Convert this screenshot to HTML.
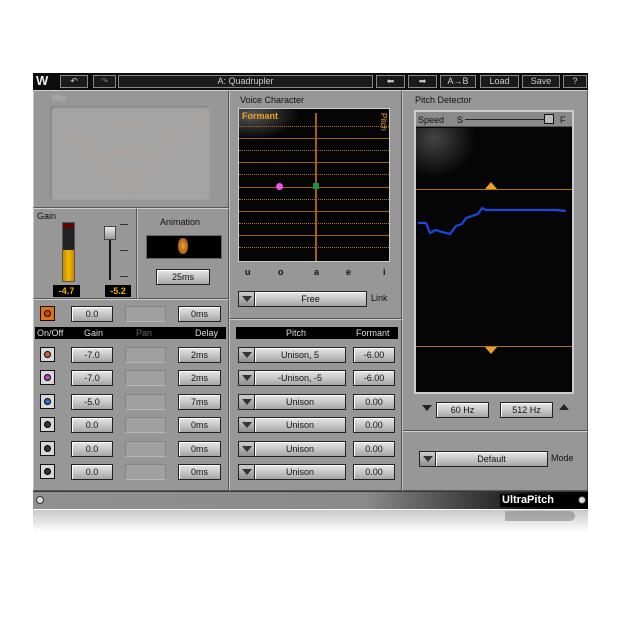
<!DOCTYPE html><html><head><style>
*{margin:0;padding:0;box-sizing:border-box}
body{width:620px;height:620px;background:#fff;position:relative;overflow:hidden;font-family:"Liberation Sans",sans-serif;font-size:9px;color:#111}
.a{position:absolute}
.tb{position:absolute;top:75px;height:13px;border:1px solid #888;background:#1a1a1a;color:#ccc;font-size:9px;text-align:center;line-height:11px}
.p{position:absolute;background:#979797;border-top:1px solid #cfcfcf;border-left:1px solid #c4c4c4;border-right:1px solid #555;border-bottom:1px solid #555}
.b{position:absolute;height:16px;border:1px solid #222;background:linear-gradient(#e6e6e6,#c8c8c8 50%,#a6a6a6);text-align:center;line-height:14px;font-size:9px;color:#111;box-shadow:inset 1px 1px 0 #fff}
.pan{position:absolute;height:16px;background:#a0a0a0;border:1px solid #858585;border-bottom-color:#b8b8b8}
.dd{position:absolute;width:17px;height:16px;border:1px solid #222;background:linear-gradient(#cfcfcf,#8f8f8f)}
.dd:after{content:"";position:absolute;left:3px;top:4px;border-left:5px solid transparent;border-right:5px solid transparent;border-top:6px solid #333}
.led{position:absolute;width:15px;height:15px;border:1px solid #111;background:#d8d8d8}
.led i{position:absolute;left:3px;top:3px;width:7px;height:7px;border-radius:50%;border:1px solid #000}
.hd{position:absolute;height:12px;background:#000;color:#ddd;font-size:9px;line-height:12px}
.lbl{position:absolute;font-size:9px;color:#111}
.hl{position:absolute;left:0;width:152px;height:1px;background:#a06010}
.dl{position:absolute;left:0;width:152px;border-top:1px dotted #b07020}
</style></head><body>
<div class="a" style="left:33px;top:73px;width:555px;height:436px;background:#3a3a3a"></div>
<div class="a" style="left:33px;top:73px;width:555px;height:17px;background:#0c0c0c"></div>
<div class="a" style="left:36px;top:74px;color:#eee;font-size:13px;font-weight:bold;line-height:14px">W</div>
<div class="tb" style="left:60px;width:28px">↶</div>
<div class="tb" style="left:93px;width:23px;color:#777">↷</div>
<div class="tb" style="left:118px;width:255px">A: Quadrupler</div>
<div class="tb" style="left:376px;width:29px">⬅</div>
<div class="tb" style="left:408px;width:29px">➡</div>
<div class="tb" style="left:440px;width:36px">A→B</div>
<div class="tb" style="left:480px;width:39px">Load</div>
<div class="tb" style="left:522px;width:38px">Save</div>
<div class="tb" style="left:563px;width:24px">?</div>

<div class="p" style="left:33px;top:90px;width:196px;height:118px"></div>
<div class="lbl" style="left:52px;top:93px;color:#b8b8b8">Mix</div>
<div class="a" style="left:50px;top:106px;width:160px;height:94px;background:#a4a4a4;border-radius:4px;box-shadow:inset 1px 1px 2px #777"></div>
<svg class="a" style="left:50px;top:106px" width="160" height="94"><g fill="none" stroke="#c09a80" stroke-width="0.8" opacity=".7"><path d="M8 8 L80 88 L152 8"/><path d="M26 43 A70 70 0 0 1 134 43"/><path d="M45.5 59 A45 45 0 0 1 114.5 59"/><path d="M63 74 A22 22 0 0 1 97 74"/></g></svg>

<div class="p" style="left:33px;top:208px;width:104px;height:91px"></div>
<div class="lbl" style="left:37px;top:211px">Gain</div>
<div class="a" style="left:62px;top:222px;width:13px;height:60px;background:#222;border:1px solid #555"></div>
<div class="a" style="left:63px;top:224px;width:11px;height:4px;background:#600"></div>
<div class="a" style="left:63px;top:250px;width:11px;height:31px;background:linear-gradient(90deg,#c88a00,#f0b800,#c88a00)"></div>
<div class="a" style="left:109px;top:226px;width:2px;height:54px;background:#111"></div>
<div class="a" style="left:104px;top:226px;width:12px;height:14px;background:linear-gradient(#eee,#999);border:1px solid #444"></div>
<div class="a" style="left:120px;top:224px;width:8px;height:1px;background:#333"></div>
<div class="a" style="left:120px;top:250px;width:8px;height:1px;background:#333"></div>
<div class="a" style="left:120px;top:276px;width:8px;height:1px;background:#333"></div>
<div class="a" style="left:53px;top:285px;width:27px;height:12px;background:#000;color:#f0b000;font-size:9px;text-align:center;line-height:12px;font-weight:bold">-4.7</div>
<div class="a" style="left:105px;top:285px;width:26px;height:12px;background:#000;color:#f0b000;font-size:9px;text-align:center;line-height:12px;font-weight:bold">-5.2</div>
<div class="p" style="left:137px;top:208px;width:92px;height:91px"></div>
<div class="lbl" style="left:160px;top:217px">Animation</div>
<div class="a" style="left:146px;top:235px;width:76px;height:24px;background:#000;border:1px solid #666"></div>
<div class="a" style="left:178px;top:238px;width:10px;height:16px;border-radius:45%;background:radial-gradient(#f0a030,#8a4000)"></div>
<div class="b" style="left:156px;top:269px;width:54px">25ms</div>

<div class="p" style="left:33px;top:299px;width:196px;height:192px"></div>
<div class="led" style="left:40px;top:306px;background:#e07010"><i style="background:#c05000"></i></div>
<div class="b" style="left:71px;top:306px;width:42px">0.0</div>
<div class="pan" style="left:125px;top:306px;width:41px"></div>
<div class="b" style="left:178px;top:306px;width:43px">0ms</div>
<div class="hd" style="left:35px;top:327px;width:191px"><span class="a" style="left:2px">On/Off</span><span class="a" style="left:49px">Gain</span><span class="a" style="left:101px;color:#666">Pan</span><span class="a" style="left:160px">Delay</span></div>

<div class="p" style="left:229px;top:90px;width:173px;height:229px"></div>
<div class="lbl" style="left:240px;top:95px">Voice Character</div>
<div class="a" style="left:238px;top:108px;width:152px;height:154px;background:#050505;border:1px solid #ccc;overflow:hidden">
<div class="a" style="left:0;top:0;width:60px;height:30px;background:radial-gradient(ellipse at 20% 20%,#555,transparent 70%)"></div>
<div class="a" style="left:3px;top:2px;color:#f0a020;font-size:9px;font-weight:bold">Formant</div>
<div class="a" style="left:140px;top:4px;color:#f0a020;font-size:8px;writing-mode:vertical-rl">Pitch</div>
<div class="dl" style="top:17px"></div><div class="hl" style="top:29px"></div><div class="dl" style="top:41px"></div><div class="hl" style="top:53px"></div><div class="dl" style="top:65px"></div><div class="hl" style="top:78px"></div><div class="dl" style="top:90px"></div><div class="hl" style="top:102px"></div><div class="dl" style="top:114px"></div><div class="hl" style="top:126px"></div><div class="dl" style="top:138px"></div>
<div class="a" style="left:76px;top:4px;width:2px;height:148px;background:#a06010"></div>
<div class="a" style="left:37px;top:74px;width:7px;height:7px;border-radius:50%;background:#f050f0"></div>
<div class="a" style="left:74px;top:74px;width:6px;height:6px;background:#1a9050"></div>
</div>
<div class="lbl" style="left:245px;top:267px;font-weight:bold">u</div>
<div class="lbl" style="left:278px;top:267px;font-weight:bold">o</div>
<div class="lbl" style="left:314px;top:267px;font-weight:bold">a</div>
<div class="lbl" style="left:346px;top:267px;font-weight:bold">e</div>
<div class="lbl" style="left:383px;top:267px;font-weight:bold">i</div>
<div class="dd" style="left:238px;top:291px"></div>
<div class="b" style="left:254px;top:291px;width:113px">Free</div>
<div class="lbl" style="left:371px;top:293px">Link</div>

<div class="p" style="left:229px;top:319px;width:173px;height:172px"></div>
<div class="hd" style="left:236px;top:327px;width:162px"><span class="a" style="left:50px">Pitch</span><span class="a" style="left:120px">Formant</span></div>

<div class="p" style="left:402px;top:90px;width:186px;height:341px"></div>
<div class="lbl" style="left:415px;top:95px">Pitch Detector</div>
<div class="a" style="left:414px;top:110px;width:160px;height:284px;border:2px solid #ccc;background:#050505"></div>
<div class="a" style="left:416px;top:112px;width:156px;height:15px;background:#8a8a8a;border-bottom:1px solid #555"></div>
<div class="lbl" style="left:418px;top:115px">Speed</div>
<div class="lbl" style="left:457px;top:115px">S</div>
<div class="a" style="left:465px;top:119px;width:80px;height:1px;background:#222"></div>
<div class="a" style="left:544px;top:114px;width:10px;height:10px;border:1px solid #111;background:#bbb"></div>
<div class="lbl" style="left:560px;top:115px">F</div>
<div class="a" style="left:416px;top:128px;width:60px;height:50px;background:radial-gradient(ellipse at 30% 20%,#444,transparent 70%)"></div>
<div class="a" style="left:416px;top:189px;width:156px;height:1px;background:#b07010"></div>
<div class="a" style="left:485px;top:182px;border-left:6px solid transparent;border-right:6px solid transparent;border-bottom:7px solid #f0a020"></div>
<div class="a" style="left:416px;top:346px;width:156px;height:1px;background:#b07010"></div>
<div class="a" style="left:485px;top:347px;border-left:6px solid transparent;border-right:6px solid transparent;border-top:7px solid #f0a020"></div>
<svg class="a" style="left:416px;top:200px" width="156" height="45"><path d="M2 23 L10 23 L14 33 L20 30 L26 32 L34 34 L40 26 L46 24 L50 18 L56 16 L62 14 L66 8 L70 10 L140 10 L150 11" fill="none" stroke="#1a48e0" stroke-width="2.2"/></svg>
<div class="a" style="left:422px;top:405px;border-left:5px solid transparent;border-right:5px solid transparent;border-top:6px solid #222"></div>
<div class="b" style="left:436px;top:402px;width:53px">60 Hz</div>
<div class="b" style="left:500px;top:402px;width:53px">512 Hz</div>
<div class="a" style="left:559px;top:404px;border-left:5px solid transparent;border-right:5px solid transparent;border-bottom:6px solid #222"></div>
<div class="p" style="left:402px;top:431px;width:186px;height:60px"></div>
<div class="dd" style="left:419px;top:451px"></div>
<div class="b" style="left:435px;top:451px;width:113px">Default</div>
<div class="lbl" style="left:551px;top:453px">Mode</div>

<div class="a" style="left:33px;top:492px;width:555px;height:17px;background:linear-gradient(90deg,#909090,#8a8a8a 60%,#111 90%,#000)"></div>
<div class="a" style="left:36px;top:496px;width:8px;height:8px;border-radius:50%;background:#ddd;border:1px solid #333"></div>
<div class="a" style="left:500px;top:494px;width:76px;height:13px;background:#000;border-radius:0 7px 7px 0;color:#fff;font-size:11px;font-weight:bold;line-height:13px;padding-left:2px">UltraPitch</div>
<div class="a" style="left:578px;top:496px;width:8px;height:8px;border-radius:50%;background:#ddd;border:1px solid #333"></div>
<div class="a" style="left:33px;top:510px;width:555px;height:22px;background:linear-gradient(#c8c8c8,#fff)"></div>
<div class="a" style="left:505px;top:511px;width:70px;height:10px;background:#777;opacity:.5;border-radius:0 6px 6px 0"></div>

<div id="rows"></div>
<script>
var g=[["#d06030","-7.0","2ms","Unison, 5","-6.00"],["#c040c0","-7.0","2ms","-Unison, -5","-6.00"],["#3070d0","-5.0","7ms","Unison","0.00"],["#333","0.0","0ms","Unison","0.00"],["#333","0.0","0ms","Unison","0.00"],["#333","0.0","0ms","Unison","0.00"]],h="";
g.forEach(function(r,i){var y=347+Math.round(i*23.4);
h+='<div class="led" style="left:40px;top:'+y+'px"><i style="background:'+r[0]+'"></i></div>';
h+='<div class="b" style="left:71px;top:'+y+'px;width:42px">'+r[1]+'</div>';
h+='<div class="pan" style="left:125px;top:'+y+'px;width:41px"></div>';
h+='<div class="b" style="left:178px;top:'+y+'px;width:43px">'+r[2]+'</div>';
h+='<div class="dd" style="left:238px;top:'+y+'px"></div>';
h+='<div class="b" style="left:254px;top:'+y+'px;width:92px">'+r[3]+'</div>';
h+='<div class="b" style="left:353px;top:'+y+'px;width:42px">'+r[4]+'</div>';});
document.getElementById("rows").innerHTML=h;
</script>
</body></html>
